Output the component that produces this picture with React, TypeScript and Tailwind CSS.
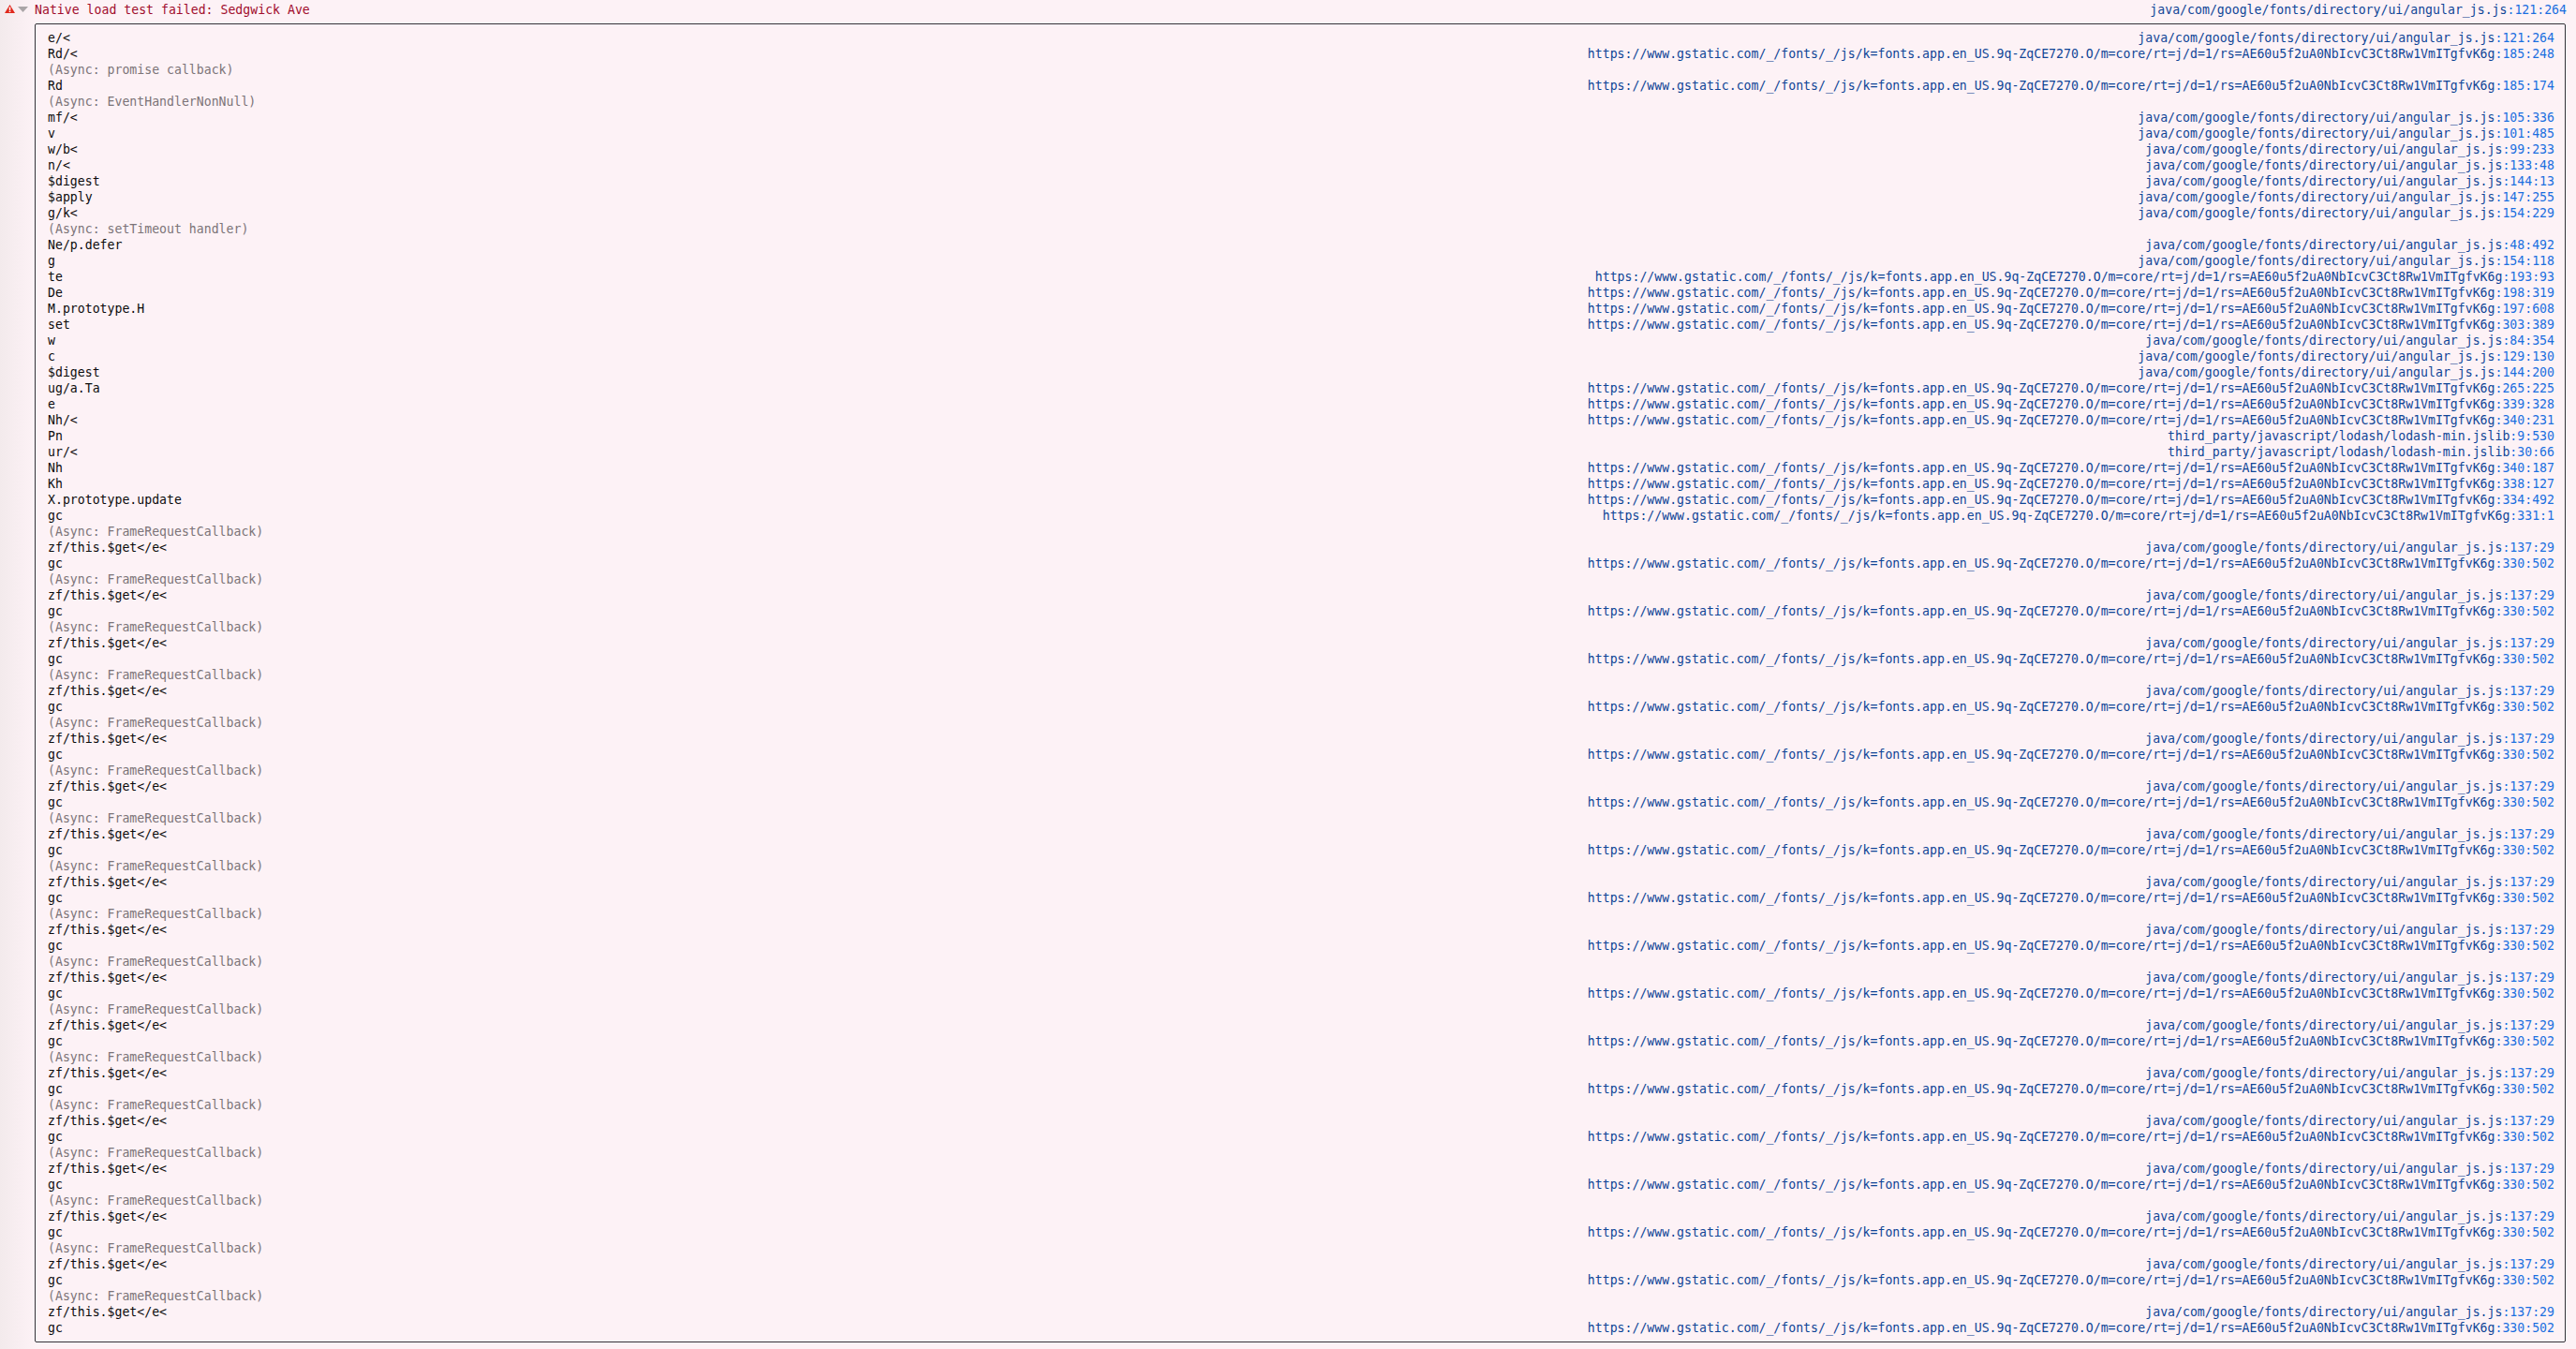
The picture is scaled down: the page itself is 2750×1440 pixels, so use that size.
const GS = "https://www.gstatic.com/_/fonts/_/js/k=fonts.app.en_US.9q-ZqCE7270.O/m=core/rt=j/d=1/rs=AE60u5f2uA0NbIcvC3Ct8Rw1VmITgfvK6g";
const NG = "java/com/google/fonts/directory/ui/angular_js.js";
const LD = "third_party/javascript/lodash/lodash-min.jslib";

type Row = { name: string; file?: string; pos?: string; async?: boolean };
const a = (name: string): Row => ({ name, async: true });
const r = (name: string, file: string, pos: string): Row => ({ name, file, pos });

const head: Row[] = [
  r("e/<", NG, "121:264"),
  r("Rd/<", GS, "185:248"),
  a("(Async: promise callback)"),
  r("Rd", GS, "185:174"),
  a("(Async: EventHandlerNonNull)"),
  r("mf/<", NG, "105:336"),
  r("v", NG, "101:485"),
  r("w/b<", NG, "99:233"),
  r("n/<", NG, "133:48"),
  r("$digest", NG, "144:13"),
  r("$apply", NG, "147:255"),
  r("g/k<", NG, "154:229"),
  a("(Async: setTimeout handler)"),
  r("Ne/p.defer", NG, "48:492"),
  r("g", NG, "154:118"),
  r("te", GS, "193:93"),
  r("De", GS, "198:319"),
  r("M.prototype.H", GS, "197:608"),
  r("set", GS, "303:389"),
  r("w", NG, "84:354"),
  r("c", NG, "129:130"),
  r("$digest", NG, "144:200"),
  r("ug/a.Ta", GS, "265:225"),
  r("e", GS, "339:328"),
  r("Nh/<", GS, "340:231"),
  r("Pn", LD, "9:530"),
  r("ur/<", LD, "30:66"),
  r("Nh", GS, "340:187"),
  r("Kh", GS, "338:127"),
  r("X.prototype.update", GS, "334:492"),
  r("gc", GS, "331:1"),
];

const rows: Row[] = [...head];
for (let i = 0; i < 17; i++) {
  rows.push(a("(Async: FrameRequestCallback)"));
  rows.push(r("zf/this.$get</e<", NG, "137:29"));
  rows.push(r("gc", GS, "330:502"));
}

function Source({ file, pos }: { file: string; pos: string }) {
  return (
    <span className="whitespace-pre text-[#0f4596]">
      {file}
      <span className="text-[#1a6fe0]">:{pos}</span>
    </span>
  );
}

export default function App() {
  return (
    <div
      className="h-[1440px] w-[2750px] overflow-hidden bg-[#fdf2f6] bg-[linear-gradient(90deg,#f3eaec_0px,#fdf2f6_38px)] text-[13.2px] leading-[17px]"
      style={{ fontFamily: '"DejaVu Sans Mono", monospace' }}
    >
      <div className="flex h-[25px] items-start justify-between pr-[10px] pt-[2px]">
        <div className="flex items-center">
          <svg width="11" height="9" viewBox="0 0 11 9" className="mb-[2px] ml-[5px]">
            <path d="M5.5 0 L11 9 L0 9 Z" fill="#e0281c" />
            <rect x="4.7" y="2.5" width="1.6" height="3.4" fill="#fff" />
            <rect x="4.7" y="6.6" width="1.6" height="1.4" fill="#fff" />
          </svg>
          <svg width="11" height="6" viewBox="0 0 11 6" className="mb-[2px] ml-[3px]">
            <path d="M0 0 H11 L5.5 6 Z" fill="#aaa5a7" />
          </svg>
          <span className="ml-[7px] whitespace-pre text-[#a10d2d]">Native load test failed: Sedgwick Ave</span>
        </div>
        <Source file={NG} pos="121:264" />
      </div>
      <div className="ml-[37px] mr-[11px] h-[1408px] overflow-hidden rounded-[2px] border border-[#33343a] pl-[13px] pr-[11px] pt-[6px]">
        {rows.map((row, i) => (
          <div key={i} className="flex h-[17px] justify-between">
            <span className={row.async ? "whitespace-pre text-[#7c7478]" : "whitespace-pre text-[#0c0c0c]"}>{row.name}</span>
            {row.file && row.pos ? <Source file={row.file} pos={row.pos} /> : null}
          </div>
        ))}
      </div>
    </div>
  );
}
